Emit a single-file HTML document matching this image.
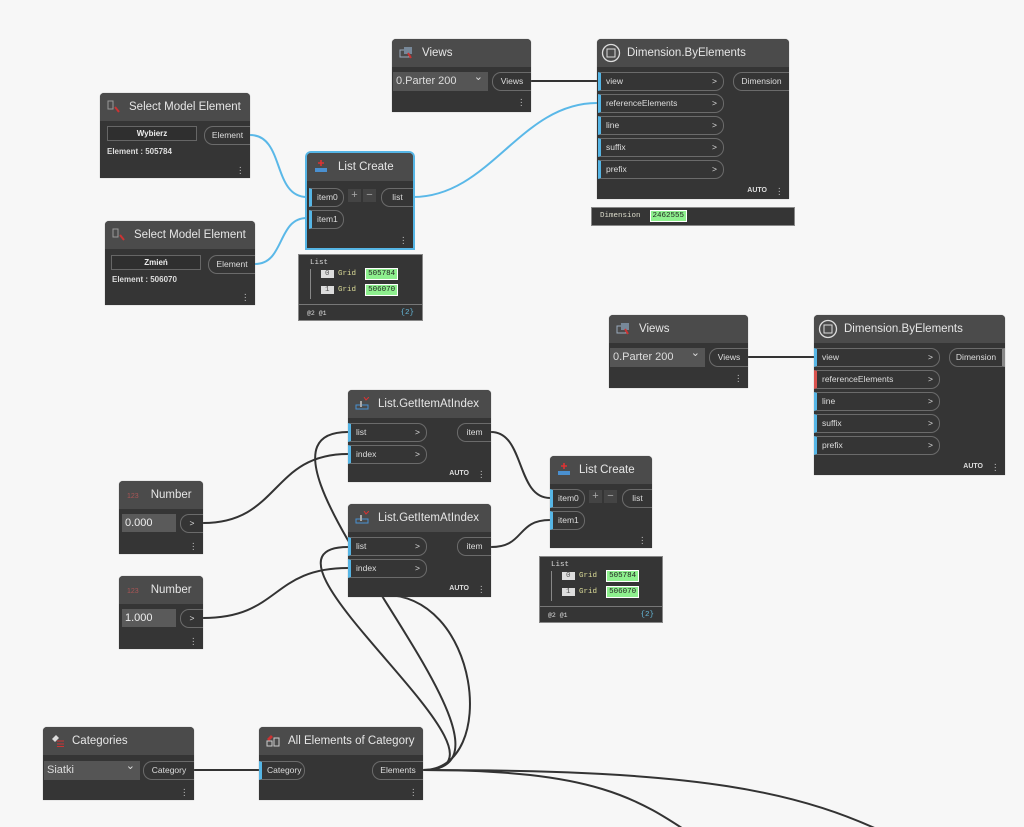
<!DOCTYPE html>
<html><head><meta charset="utf-8">
<style>
body{margin:0;width:1024px;height:827px;background:#f7f7f7;overflow:hidden;position:relative;font-family:"Liberation Sans","Noto Sans CJK SC",sans-serif}
.n{position:absolute;background:#353535;border-radius:4px 4px 0 0;box-shadow:0 0 1px #999}
.h{position:absolute;left:0;right:0;top:0;height:28px;background:#4b4b4b;border-radius:4px 4px 0 0;color:#e6e6e6;font-size:11.5px;line-height:28px}
.p{position:absolute;height:19px;box-sizing:border-box;border:1px solid #6b6b6b;border-radius:9px;color:#ddd;font-size:8.5px;line-height:17px;text-align:center}
.i{border-radius:0 9px 9px 0;border-left:3px solid #56b6e6;text-align:left;padding-left:5px}
.i b{position:absolute;right:6px;top:0;font-weight:normal}
.r{border-left-color:#d9534f}
.o{border-radius:9px 0 0 9px;border-right:none}
.dots{position:absolute;right:8px;bottom:3px;color:#bbb;font-size:10px;line-height:3px;letter-spacing:0}
.auto{position:absolute;right:22px;bottom:5px;color:#ddd;font-size:7px;font-weight:bold}
.dd{position:absolute;background:#555;color:#ddd;font-size:11px;line-height:19px;padding-left:3px;box-sizing:border-box;height:19px}
.dd.c:after{content:"⌄";position:absolute;right:5px;top:-4px;font-size:11px}
.pv{position:absolute;background:#353535;border:1px solid #888;color:#ddd;font-family:"Liberation Mono",monospace;font-size:7.5px}
.g{background:#8ef08e;color:#222;padding:1px 2px;border:1px solid #fff}
.ic{position:absolute;left:7px;top:7px;width:14px;height:13px}
</style></head><body>
<svg width="1024" height="827" style="position:absolute;left:0;top:0" fill="none" stroke-width="2">
<path d="M531,81 L597,81" stroke="#333"/>
<path d="M413,197 C490,197 520,103 597,103" stroke="#5ab8e8"/>
<path d="M250,135 C285,135 272,197 307,197" stroke="#5ab8e8"/>
<path d="M255,264 C285,264 277,218 307,218" stroke="#5ab8e8"/>
<path d="M748,357 L814,357" stroke="#333"/>
<path d="M491,432 C525,432 516,498 550,498" stroke="#333"/>
<path d="M491,547 C525,547 516,520 550,520" stroke="#333"/>
<path d="M203,523 C280,523 271,454 348,454" stroke="#333"/>
<path d="M203,618 C280,618 271,568 348,568" stroke="#333"/>
<path d="M194,770 L259,770" stroke="#333"/>
<path d="M423,770 C560,770 210,432 348,432" stroke="#333"/>
<path d="M423,770 C540,770 230,547 348,547" stroke="#333"/>
<path d="M423,770 C500,770 480,590 380,595" stroke="#333"/>
<path d="M423,770 C600,770 640,800 700,840" stroke="#333"/>
<path d="M423,770 C700,770 800,790 900,840" stroke="#333"/>
</svg>

<!-- Views 1 -->
<div class="n" style="left:392px;top:39px;width:139px;height:73px">
<div class="h"><svg class="ic" viewBox="0 0 14 13"><rect x="1" y="4" width="9" height="7" fill="none" stroke="#9ab" /><rect x="5" y="1" width="8" height="7" fill="#789"/><path d="M9 7l3 5" stroke="#c33" stroke-width="2"/></svg><span style="margin-left:30px">Views</span></div>
<div class="dd c" style="left:1px;top:33px;width:95px">0.Parter 200</div>
<div class="p o" style="left:100px;top:33px;width:39px">Views</div>
<div class="dots" style="bottom:5px">·<br>·<br>·</div></div>

<!-- Dimension 1 -->
<div class="n" style="left:597px;top:39px;width:192px;height:160px">
<div class="h"><svg class="ic" style="left:4px;top:4px;width:20px;height:20px" viewBox="0 0 20 20"><circle cx="10" cy="10" r="8.5" fill="none" stroke="#ddd" stroke-width="1.3"/><rect x="6" y="6" width="8" height="8" fill="none" stroke="#ddd"/></svg><span style="margin-left:30px">Dimension.ByElements</span></div>
<div class="p i" style="left:1px;top:33px;width:126px">view<b>&gt;</b></div>
<div class="p i" style="left:1px;top:55px;width:126px">referenceElements<b>&gt;</b></div>
<div class="p i" style="left:1px;top:77px;width:126px">line<b>&gt;</b></div>
<div class="p i" style="left:1px;top:99px;width:126px">suffix<b>&gt;</b></div>
<div class="p i" style="left:1px;top:121px;width:126px">prefix<b>&gt;</b></div>
<div class="p o" style="left:136px;top:33px;width:56px">Dimension</div>
<div class="auto">AUTO</div><div class="dots">·<br>·<br>·</div></div>
<div class="pv" style="left:591px;top:207px;width:202px;height:17px;line-height:17px;color:#ddc"><span style="margin-left:8px">Dimension</span> &nbsp;<span class="g">2462555</span></div>

<!-- SME 1 -->
<div class="n" style="left:100px;top:93px;width:150px;height:85px">
<div class="h"><svg class="ic" viewBox="0 0 14 13"><rect x="1" y="1" width="5" height="8" fill="none" stroke="#999"/><path d="M8 7l4 5" stroke="#c33" stroke-width="2"/></svg><span style="margin-left:29px">Select Model Element</span></div>
<div style="position:absolute;left:7px;top:33px;width:90px;height:15px;border:1px solid #666;box-sizing:border-box;background:#2f2f2f;color:#eee;font-size:8px;font-weight:bold;text-align:center;line-height:13px">Wybierz</div>
<div class="p o" style="left:104px;top:33px;width:46px">Element</div>
<div style="position:absolute;left:7px;top:54px;color:#ddd;font-size:8px;font-weight:bold">Element : 505784</div>
<div class="dots">·<br>·<br>·</div></div>

<!-- SME 2 -->
<div class="n" style="left:105px;top:221px;width:150px;height:84px">
<div class="h"><svg class="ic" viewBox="0 0 14 13"><rect x="1" y="1" width="5" height="8" fill="none" stroke="#999"/><path d="M8 7l4 5" stroke="#c33" stroke-width="2"/></svg><span style="margin-left:29px">Select Model Element</span></div>
<div style="position:absolute;left:6px;top:34px;width:90px;height:15px;border:1px solid #666;box-sizing:border-box;background:#2f2f2f;color:#eee;font-size:8px;font-weight:bold;text-align:center;line-height:13px">Zmień</div>
<div class="p o" style="left:103px;top:34px;width:47px">Element</div>
<div style="position:absolute;left:7px;top:54px;color:#ddd;font-size:8px;font-weight:bold">Element : 506070</div>
<div class="dots">·<br>·<br>·</div></div>

<!-- List Create 1 -->
<div class="n" style="left:307px;top:153px;width:106px;height:95px;box-shadow:0 0 0 2px #56b6e6">
<div class="h"><svg class="ic" viewBox="0 0 14 13"><path d="M7 0v6M4 3h6" stroke="#d33" stroke-width="1.6"/><rect x="1" y="8" width="12" height="4" fill="#4a90d0"/></svg><span style="margin-left:31px">List Create</span></div>
<div class="p i" style="left:2px;top:35px;width:35px">item0</div>
<div style="position:absolute;left:41px;top:36px;width:13px;height:13px;background:#444;color:#aaa;font-size:11px;line-height:12px;text-align:center">+</div>
<div style="position:absolute;left:56px;top:36px;width:13px;height:13px;background:#444;color:#aaa;font-size:11px;line-height:12px;text-align:center">−</div>
<div class="p o" style="left:74px;top:35px;width:32px">list</div>
<div class="p i" style="left:2px;top:57px;width:35px">item1</div>
<div class="dots">·<br>·<br>·</div></div>
<div class="pv" style="left:298px;top:254px;width:123px;height:65px">
<div style="position:absolute;left:11px;top:4px">List</div>
<div style="position:absolute;left:11px;top:14px;width:1px;height:30px;background:#888"></div>
<div style="position:absolute;left:22px;top:15px"><span style="background:#ddd;color:#555;padding:0 4px">0</span> <span style="color:#dd9">Grid</span> &nbsp;<span class="g">505784</span></div>
<div style="position:absolute;left:22px;top:31px"><span style="background:#ddd;color:#555;padding:0 4px">1</span> <span style="color:#dd9">Grid</span> &nbsp;<span class="g">506070</span></div>
<div style="position:absolute;left:0;right:0;top:49px;border-top:1px solid #777"></div>
<div style="position:absolute;left:8px;top:55px;font-size:6.5px">@2 @1</div>
<div style="position:absolute;right:8px;top:54px;color:#6bd">{2}</div></div>

<!-- Views 2 -->
<div class="n" style="left:609px;top:315px;width:139px;height:73px">
<div class="h"><svg class="ic" viewBox="0 0 14 13"><rect x="1" y="4" width="9" height="7" fill="none" stroke="#9ab"/><rect x="5" y="1" width="8" height="7" fill="#789"/><path d="M9 7l3 5" stroke="#c33" stroke-width="2"/></svg><span style="margin-left:30px">Views</span></div>
<div class="dd c" style="left:1px;top:33px;width:95px">0.Parter 200</div>
<div class="p o" style="left:100px;top:33px;width:39px">Views</div>
<div class="dots" style="bottom:5px">·<br>·<br>·</div></div>

<!-- Dimension 2 -->
<div class="n" style="left:814px;top:315px;width:191px;height:160px">
<div class="h"><svg class="ic" style="left:4px;top:4px;width:20px;height:20px" viewBox="0 0 20 20"><circle cx="10" cy="10" r="8.5" fill="none" stroke="#ddd" stroke-width="1.3"/><rect x="6" y="6" width="8" height="8" fill="none" stroke="#ddd"/></svg><span style="margin-left:30px">Dimension.ByElements</span></div>
<div class="p i" style="left:0;top:33px;width:126px">view<b>&gt;</b></div>
<div class="p i r" style="left:0;top:55px;width:126px">referenceElements<b>&gt;</b></div>
<div class="p i" style="left:0;top:77px;width:126px">line<b>&gt;</b></div>
<div class="p i" style="left:0;top:99px;width:126px">suffix<b>&gt;</b></div>
<div class="p i" style="left:0;top:121px;width:126px">prefix<b>&gt;</b></div>
<div class="p o" style="left:135px;top:33px;width:56px;border-right:3px solid #888">Dimension</div>
<div class="auto">AUTO</div><div class="dots">·<br>·<br>·</div></div>

<!-- GetItemAtIndex 1 -->
<div class="n" style="left:348px;top:390px;width:143px;height:92px">
<div class="h"><svg class="ic" viewBox="0 0 14 13"><path d="M9 0l2 3 3-3" stroke="#d33" fill="none"/><rect x="1" y="8" width="12" height="4" fill="none" stroke="#4a90d0"/><rect x="5" y="4" width="2" height="6" fill="#aaa"/></svg><span style="margin-left:30px">List.GetItemAtIndex</span></div>
<div class="p i" style="left:0;top:33px;width:79px">list<b>&gt;</b></div>
<div class="p i" style="left:0;top:55px;width:79px">index<b>&gt;</b></div>
<div class="p o" style="left:109px;top:33px;width:34px">item</div>
<div class="auto">AUTO</div><div class="dots">·<br>·<br>·</div></div>

<!-- GetItemAtIndex 2 -->
<div class="n" style="left:348px;top:504px;width:143px;height:93px">
<div class="h"><svg class="ic" viewBox="0 0 14 13"><path d="M9 0l2 3 3-3" stroke="#d33" fill="none"/><rect x="1" y="8" width="12" height="4" fill="none" stroke="#4a90d0"/><rect x="5" y="4" width="2" height="6" fill="#aaa"/></svg><span style="margin-left:30px">List.GetItemAtIndex</span></div>
<div class="p i" style="left:0;top:33px;width:79px">list<b>&gt;</b></div>
<div class="p i" style="left:0;top:55px;width:79px">index<b>&gt;</b></div>
<div class="p o" style="left:109px;top:33px;width:34px">item</div>
<div class="auto">AUTO</div><div class="dots">·<br>·<br>·</div></div>

<!-- List Create 2 -->
<div class="n" style="left:550px;top:456px;width:102px;height:92px">
<div class="h"><svg class="ic" viewBox="0 0 14 13"><path d="M7 0v6M4 3h6" stroke="#d33" stroke-width="1.6"/><rect x="1" y="8" width="12" height="4" fill="#4a90d0"/></svg><span style="margin-left:29px">List Create</span></div>
<div class="p i" style="left:0;top:33px;width:35px">item0</div>
<div style="position:absolute;left:39px;top:34px;width:13px;height:13px;background:#444;color:#aaa;font-size:11px;line-height:12px;text-align:center">+</div>
<div style="position:absolute;left:54px;top:34px;width:13px;height:13px;background:#444;color:#aaa;font-size:11px;line-height:12px;text-align:center">−</div>
<div class="p o" style="left:72px;top:33px;width:30px">list</div>
<div class="p i" style="left:0;top:55px;width:35px">item1</div>
<div class="dots">·<br>·<br>·</div></div>
<div class="pv" style="left:539px;top:556px;width:122px;height:65px">
<div style="position:absolute;left:11px;top:4px">List</div>
<div style="position:absolute;left:11px;top:14px;width:1px;height:30px;background:#888"></div>
<div style="position:absolute;left:22px;top:15px"><span style="background:#ddd;color:#555;padding:0 4px">0</span> <span style="color:#dd9">Grid</span> &nbsp;<span class="g">505784</span></div>
<div style="position:absolute;left:22px;top:31px"><span style="background:#ddd;color:#555;padding:0 4px">1</span> <span style="color:#dd9">Grid</span> &nbsp;<span class="g">506070</span></div>
<div style="position:absolute;left:0;right:0;top:49px;border-top:1px solid #777"></div>
<div style="position:absolute;left:8px;top:55px;font-size:6.5px">@2 @1</div>
<div style="position:absolute;right:8px;top:54px;color:#6bd">{2}</div></div>

<!-- Number 1 -->
<div class="n" style="left:119px;top:481px;width:84px;height:73px">
<div class="h"><span style="margin-left:8px;color:#a55;font-size:7px">123</span><span style="margin-left:12px">Number</span></div>
<div class="dd" style="left:3px;top:33px;width:54px;height:18px;background:#5a5a5a;color:#eee">0.000</div>
<div class="p o" style="left:61px;top:33px;width:23px">&gt;</div>
<div class="dots">·<br>·<br>·</div></div>

<!-- Number 2 -->
<div class="n" style="left:119px;top:576px;width:84px;height:73px">
<div class="h"><span style="margin-left:8px;color:#a55;font-size:7px">123</span><span style="margin-left:12px">Number</span></div>
<div class="dd" style="left:3px;top:33px;width:54px;height:18px;background:#5a5a5a;color:#eee">1.000</div>
<div class="p o" style="left:61px;top:33px;width:23px">&gt;</div>
<div class="dots">·<br>·<br>·</div></div>

<!-- Categories -->
<div class="n" style="left:43px;top:727px;width:151px;height:73px">
<div class="h"><svg class="ic" viewBox="0 0 14 13"><path d="M2 5l4-4 3 3-4 4z" fill="#ddd"/><path d="M7 7h7M7 10h7M7 12.5h7" stroke="#c33"/></svg><span style="margin-left:29px">Categories</span></div>
<div class="dd c" style="left:1px;top:34px;width:96px">Siatki</div>
<div class="p o" style="left:100px;top:34px;width:51px">Category</div>
<div class="dots">·<br>·<br>·</div></div>

<!-- All Elements of Category -->
<div class="n" style="left:259px;top:727px;width:164px;height:73px">
<div class="h"><svg class="ic" viewBox="0 0 14 13"><path d="M1 5l4-4 2 2-4 4z" fill="#c33"/><rect x="1" y="7" width="5" height="5" fill="none" stroke="#ccc"/><rect x="8" y="4" width="5" height="8" fill="none" stroke="#ccc"/></svg><span style="margin-left:29px">All Elements of Category</span></div>
<div class="p i" style="left:0;top:34px;width:46px">Category</div>
<div class="p o" style="left:113px;top:34px;width:51px">Elements</div>
<div class="dots">·<br>·<br>·</div></div>
</body></html>
